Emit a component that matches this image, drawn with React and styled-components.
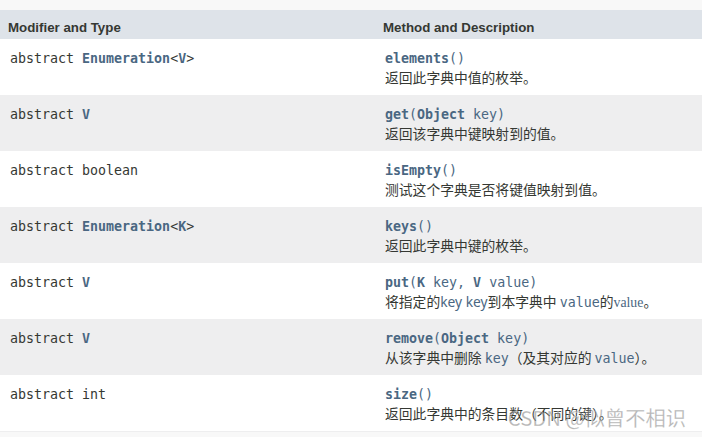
import React from "react";
import styled, { createGlobalStyle } from "styled-components";

const GlobalStyle = createGlobalStyle`
  html, body {
    margin: 0;
    padding: 0;
    background: #f8f8f8;
  }
`;

const rows = [
  {
    type: ["abstract ", { link: "Enumeration" }, "<", { link: "V" }, ">"],
    sig: [{ link: "elements" }, "()"],
    desc: ["返回此字典中值的枚举。"],
  },
  {
    type: ["abstract ", { link: "V" }],
    sig: [{ link: "get" }, "(", { link: "Object" }, " key)"],
    desc: ["返回该字典中键映射到的值。"],
  },
  {
    type: ["abstract boolean"],
    sig: [{ link: "isEmpty" }, "()"],
    desc: ["测试这个字典是否将键值映射到值。"],
  },
  {
    type: ["abstract ", { link: "Enumeration" }, "<", { link: "K" }, ">"],
    sig: [{ link: "keys" }, "()"],
    desc: ["返回此字典中键的枚举。"],
  },
  {
    type: ["abstract ", { link: "V" }],
    sig: [{ link: "put" }, "(", { link: "K" }, " key, ", { link: "V" }, " value)"],
    desc: [
      "将指定的",
      { sans: "key key" },
      "到本字典中 ",
      { code: "value" },
      "的",
      { serif: "value" },
      "。",
    ],
  },
  {
    type: ["abstract ", { link: "V" }],
    sig: [{ link: "remove" }, "(", { link: "Object" }, " key)"],
    desc: ["从该字典中删除 ", { code: "key" }, "（及其对应的 ", { code: "value" }, "）。"],
  },
  {
    type: ["abstract int"],
    sig: [{ link: "size" }, "()"],
    desc: ["返回此字典中的条目数（不同的键）。"],
  },
];

const renderCode = (parts) =>
  parts.map((p, i) => (typeof p === "string" ? p : <Link key={i}>{p.link}</Link>));

const renderDesc = (parts) =>
  parts.map((p, i) => {
    if (typeof p === "string") return p;
    if (p.code) return <InlineCode key={i}>{p.code}</InlineCode>;
    if (p.sans) return <LatinWord key={i}>{p.sans}</LatinWord>;
    return <LatinWord key={i} $serif>{p.serif}</LatinWord>;
  });

export default function App() {
  return (
    <>
      <GlobalStyle />
      <Page>
        <Table>
          <HeadCell>Modifier and Type</HeadCell>
          <HeadCell>Method and Description</HeadCell>
          {rows.map((r, i) => (
            <React.Fragment key={i}>
              <Cell $alt={i % 2 === 1}>
                <TypeCode>{renderCode(r.type)}</TypeCode>
              </Cell>
              <Cell $alt={i % 2 === 1}>
                <SigCode>{renderCode(r.sig)}</SigCode>
                <Desc>{renderDesc(r.desc)}</Desc>
              </Cell>
            </React.Fragment>
          ))}
        </Table>
        <Watermark>CSDN @似曾不相识</Watermark>
      </Page>
    </>
  );
}

const Page = styled.div`
  position: relative;
  width: 702px;
  height: 437px;
  padding-top: 10px;
  box-sizing: border-box;
  background: #f8f8f8;
  overflow: hidden;
`;

const Table = styled.div`
  display: grid;
  grid-template-columns: 375px 1fr;
  grid-template-rows: 29px;
  grid-auto-rows: 56px;
  border-bottom: 1px solid #eeeeef;
`;

const HeadCell = styled.div`
  background: #dee3e9;
  color: #353833;
  font-family: "Liberation Sans", Arial, sans-serif;
  font-weight: bold;
  font-size: 13.3px;
  line-height: 16px;
  padding: 10px 8px 0;
`;

const Cell = styled.div`
  background: ${(p) => (p.$alt ? "#eeeeef" : "#ffffff")};
  padding: 10px 10px 0;
  color: #353833;
`;

const TypeCode = styled.div`
  font-family: "DejaVu Sans Mono", monospace;
  font-size: 13.3px;
  line-height: 19px;
  white-space: pre;
  color: #353833;
`;

const SigCode = styled(TypeCode)`
  color: #4a6782;
`;

const Link = styled.b`
  color: #4a6782;
  font-weight: bold;
`;

const Desc = styled.div`
  margin-top: -1px;
  font-family: "Noto Sans CJK SC", "Noto Sans", sans-serif;
  font-size: 13.8px;
  line-height: 20px;
  color: #353833;
  white-space: pre;
`;

const InlineCode = styled.code`
  font-family: "DejaVu Sans Mono", monospace;
  font-size: 13.3px;
  color: #4a6782;
`;

const LatinWord = styled.span`
  font-family: ${(p) =>
    p.$serif ? `"Liberation Serif", serif` : `"Noto Sans", sans-serif`};
  color: #4a6782;
`;

const Watermark = styled.div`
  position: absolute;
  right: 16px;
  bottom: 8px;
  font-family: "Noto Sans CJK SC", sans-serif;
  font-size: 20.3px;
  line-height: 24px;
  color: rgba(120, 120, 120, 0.55);
  -webkit-text-stroke: 0.3px rgba(255, 255, 255, 0.6);
  pointer-events: none;
`;
